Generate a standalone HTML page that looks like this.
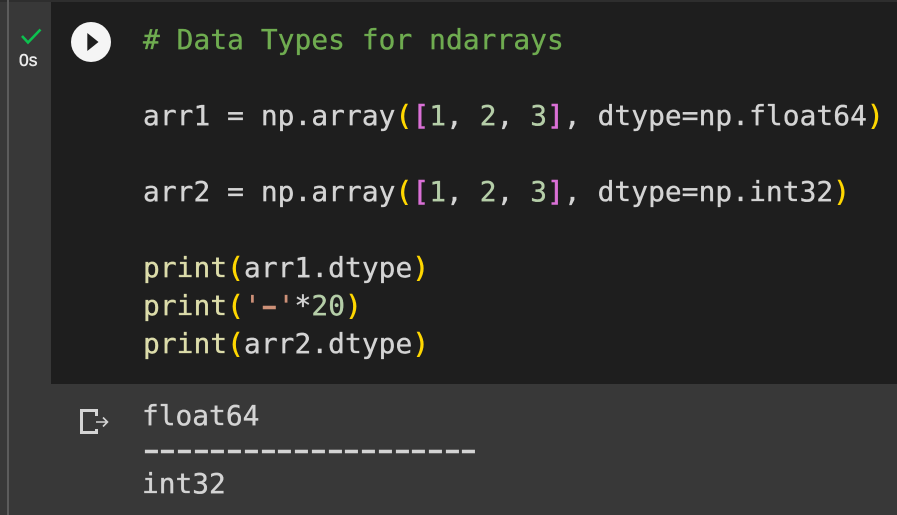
<!DOCTYPE html>
<html>
<head>
<meta charset="utf-8">
<style>
html,body{margin:0;padding:0;width:897px;height:515px;overflow:hidden;background:#383838;}
.l{position:absolute;left:143px;font-family:"DejaVu Sans Mono","Liberation Mono",monospace;font-size:27.85px;letter-spacing:.07px;line-height:38px;height:38px;white-space:pre;color:#d4d4d4;-webkit-text-stroke:.35px currentColor;}
.c{color:#6fac50}.y{color:#ffd700;-webkit-text-stroke:.55px #ffd700}.m{color:#da70d6;-webkit-text-stroke:.6px #da70d6}.n{color:#b5cea8}.f{color:#dcdcaa}.s{color:#ce9178}
b{display:inline-block;font-weight:normal;transform:scale(1.75,1.35);}
</style>
</head>
<body>
<div style="position:absolute;left:0;top:0;width:897px;height:2px;background:#2e2e2e"></div>
<div style="position:absolute;left:7px;top:0;width:2px;height:515px;background:#5c5c5c"></div>
<div style="position:absolute;left:51px;top:2px;width:846px;height:382px;background:#1e1e1e"></div>

<svg style="position:absolute;left:0;top:0" width="140" height="90" viewBox="0 0 140 90">
<path d="M22 36 L28 42.5 L40.5 29.5" fill="none" stroke="#0cc14f" stroke-width="2.6"/>
<circle cx="91" cy="42" r="20" fill="#f5f5f5"/>
<path d="M87.3 33 L98.5 42 L87.3 51 Z" fill="#1e1e1e"/>
</svg>
<div style="position:absolute;left:19px;top:50px;font-family:'Liberation Sans',sans-serif;font-size:17.5px;line-height:20px;color:#ececec;-webkit-text-stroke:.4px #ececec">0s</div>

<div class="l" style="top:21px"><span class="c"># Data Types for ndarrays</span></div>
<div class="l" style="top:97px">arr1 = np.array<span class="y">(</span><span class="m">[</span><span class="n">1</span>, <span class="n">2</span>, <span class="n">3</span><span class="m">]</span>, dtype=np.float64<span class="y">)</span></div>
<div class="l" style="top:173px">arr2 = np.array<span class="y">(</span><span class="m">[</span><span class="n">1</span>, <span class="n">2</span>, <span class="n">3</span><span class="m">]</span>, dtype=np.int32<span class="y">)</span></div>
<div class="l" style="top:249px"><span class="f">print</span><span class="y">(</span>arr1.dtype<span class="y">)</span></div>
<div class="l" style="top:287px"><span class="f">print</span><span class="y">(</span><span class="s">'<b>-</b>'</span>*<span class="n">20</span><span class="y">)</span></div>
<div class="l" style="top:325px"><span class="f">print</span><span class="y">(</span>arr2.dtype<span class="y">)</span></div>

<svg style="position:absolute;left:70px;top:400px" width="50" height="45" viewBox="0 0 50 45">
<path d="M26.5 16 V10.5 H11.5 V32.5 H26.5 V29" fill="none" stroke="#d4d4d4" stroke-width="3"/>
<path d="M26 22 H37.5 M33 17.5 L37.5 22 L33 26.5" fill="none" stroke="#d4d4d4" stroke-width="1.6"/>
</svg>

<div class="l" style="top:397px;left:142px;letter-spacing:0">float64</div>
<div class="l" style="top:431px;left:142.5px;letter-spacing:-.03px"><b>-</b><b>-</b><b>-</b><b>-</b><b>-</b><b>-</b><b>-</b><b>-</b><b>-</b><b>-</b><b>-</b><b>-</b><b>-</b><b>-</b><b>-</b><b>-</b><b>-</b><b>-</b><b>-</b><b>-</b></div>
<div class="l" style="top:465px;left:142px;letter-spacing:0">int32</div>
</body>
</html>
